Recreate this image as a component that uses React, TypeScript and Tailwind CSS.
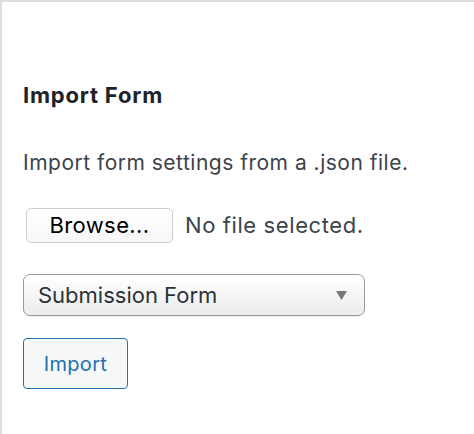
export default function App() {
    return (
        <div className="h-[434px] w-[474px] border-l-2 border-t-2 border-[#dcdcde] bg-white pl-[21px] font-['Inter',sans-serif]">
            <h2 className="mt-[79px] text-[22px] font-bold leading-[28px] tracking-[0.8px] text-[#1d2327]">
                Import Form
            </h2>
            <p className="mt-[40px] text-[21px] leading-[28px] tracking-[0.5px] text-[#3c434a]">
                Import form settings from a .json file.
            </p>
            <div className="mt-[31px] flex items-center">
                <button className="ml-[3px] h-[35px] w-[147px] rounded-[5px] border border-[#cfcfcf] bg-gradient-to-b from-white to-[#f7f7f7] text-[22px] tracking-[0.4px] text-black">
                    Browse...
                </button>
                <span className="ml-[12px] text-[22px] tracking-[0.6px] text-[#3c434a]">No file selected.</span>
            </div>
            <div className="mt-[31px] flex h-[42px] w-[342px] items-center justify-between rounded-[7px] border border-[#9a9a9a] bg-gradient-to-b from-white to-[#ececec] pl-[14px] pr-[17px] shadow-[0_1px_1px_rgba(0,0,0,0.08)]">
                <span className="text-[22px] text-[#2c3338]">Submission Form</span>
                <svg width="11" height="9" viewBox="0 0 11 9">
                    <path d="M0 0 H11 L5.5 9 Z" fill="#777" />
                </svg>
            </div>
            <button className="mt-[22px] h-[51px] w-[105px] rounded-[4px] border border-[#2271b1] bg-[#f6f7f7] text-[20px] tracking-[0.3px] text-[#2271b1]">
                Import
            </button>
        </div>
    );
}
